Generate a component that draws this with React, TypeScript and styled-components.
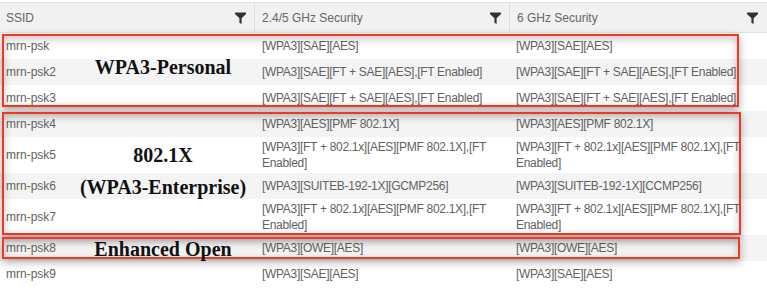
import styled, { createGlobalStyle } from 'styled-components';

const GlobalStyle = createGlobalStyle`
  html, body {
    margin: 0;
    padding: 0;
    background: #ffffff;
  }
  body {
    font-family: 'Liberation Sans', Arial, sans-serif;
  }
`;

type Row = { ssid: string; band: string; six: string };

const rows: Row[] = [
  { ssid: 'mrn-psk', band: '[WPA3][SAE][AES]', six: '[WPA3][SAE][AES]' },
  {
    ssid: 'mrn-psk2',
    band: '[WPA3][SAE][FT + SAE][AES],[FT Enabled]',
    six: '[WPA3][SAE][FT + SAE][AES],[FT Enabled]',
  },
  {
    ssid: 'mrn-psk3',
    band: '[WPA3][SAE][FT + SAE][AES],[FT Enabled]',
    six: '[WPA3][SAE][FT + SAE][AES],[FT Enabled]',
  },
  { ssid: 'mrn-psk4', band: '[WPA3][AES][PMF 802.1X]', six: '[WPA3][AES][PMF 802.1X]' },
  {
    ssid: 'mrn-psk5',
    band: '[WPA3][FT + 802.1x][AES][PMF 802.1X],[FT Enabled]',
    six: '[WPA3][FT + 802.1x][AES][PMF 802.1X],[FT Enabled]',
  },
  {
    ssid: 'mrn-psk6',
    band: '[WPA3][SUITEB-192-1X][GCMP256]',
    six: '[WPA3][SUITEB-192-1X][CCMP256]',
  },
  {
    ssid: 'mrn-psk7',
    band: '[WPA3][FT + 802.1x][AES][PMF 802.1X],[FT Enabled]',
    six: '[WPA3][FT + 802.1x][AES][PMF 802.1X],[FT Enabled]',
  },
  { ssid: 'mrn-psk8', band: '[WPA3][OWE][AES]', six: '[WPA3][OWE][AES]' },
  { ssid: 'mrn-psk9', band: '[WPA3][SAE][AES]', six: '[WPA3][SAE][AES]' },
];

// annotation boxes drawn over the table
const callouts = [
  { top: 34, height: 73, width: 737, lift: 7, lines: ['WPA3-Personal'] },
  { top: 112, height: 123, width: 739, lift: 5, lines: ['802.1X', '(WPA3-Enterprise)'] },
  { top: 237, height: 22, width: 738, lift: -2, lines: ['Enhanced Open'] },
];

const Page = styled.div`
  position: relative;
  width: 767px;
  height: 288px;
  overflow: hidden;
  color: #555;
  font-size: 12px;
`;

const Columns = `
  display: grid;
  grid-template-columns: 255px 255px 257px;
`;

const HeaderRow = styled.div`
  ${Columns};
  height: 31px;
  margin-top: 2px;
  background: #f1f1f1;
  border-top: 1px solid #e6e6e6;
  border-bottom: 1px solid #e2e2e2;
  box-sizing: border-box;
`;

const HeaderCell = styled.div`
  display: flex;
  align-items: center;
  justify-content: space-between;
  padding: 1px 8px 0 6px;
  color: #666;
  font-size: 12px;
  border-right: 1px solid #dddddd;

  &:last-child {
    border-right: none;
    padding-left: 6px;
    padding-right: 9px;
  }
  & + & {
    padding-left: 7px;
  }
`;

const DataRow = styled.div<{ $striped: boolean }>`
  ${Columns};
  min-height: 26px;
  background: ${({ $striped }) => ($striped ? '#f4f4f4' : '#ffffff')};

  &:first-of-type {
    min-height: 25px;
  }
`;

const Cell = styled.div`
  display: flex;
  align-items: center;
  padding: 2px 9px 2px 7px;
  line-height: 16px;
  color: #626262;
  letter-spacing: -0.3px;

  &:first-child {
    padding-left: 6px;
    letter-spacing: 0;
  }
  &:last-child {
    padding-left: 6px;
    padding-right: 12px;
  }
`;

const Callout = styled.div<{ $top: number; $height: number; $width: number }>`
  position: absolute;
  left: 2px;
  top: ${({ $top }) => $top}px;
  width: ${({ $width }) => $width}px;
  height: ${({ $height }) => $height}px;
  box-sizing: border-box;
  border: 2px solid #ee3a22;
  box-shadow: 0 3px 8px rgba(0, 0, 0, 0.34), inset 0 3px 8px rgba(0, 0, 0, 0.22);
  display: flex;
`;

const LabelArea = styled.div<{ $lift: number }>`
  width: 318px;
  display: flex;
  flex-direction: column;
  align-items: center;
  justify-content: center;
  padding-bottom: ${({ $lift }) => Math.max($lift, 0)}px;
  padding-top: ${({ $lift }) => Math.max(-$lift, 0)}px;
  box-sizing: border-box;
`;

const Label = styled.div`
  font-family: 'Liberation Serif', 'Times New Roman', serif;
  font-weight: bold;
  font-size: 20px;
  line-height: 32px;
  color: #111;
  white-space: nowrap;
`;

function FilterIcon() {
  return (
    <svg width="11" height="12" viewBox="0 0 11 12" aria-hidden>
      <path d="M0 0.5h11v1.6L6.6 6.2V12L4.4 10.8V6.2L0 2.1z" fill="#333" />
    </svg>
  );
}

export default function App() {
  return (
    <Page>
      <GlobalStyle />
      <HeaderRow>
        {['SSID', '2.4/5 GHz Security', '6 GHz Security'].map((h) => (
          <HeaderCell key={h}>
            <span>{h}</span>
            <FilterIcon />
          </HeaderCell>
        ))}
      </HeaderRow>
      {rows.map((r, i) => (
        <DataRow key={r.ssid} $striped={i % 2 === 1}>
          <Cell>{r.ssid}</Cell>
          <Cell>{r.band}</Cell>
          <Cell>{r.six}</Cell>
        </DataRow>
      ))}
      {callouts.map((c) => (
        <Callout key={c.top} $top={c.top} $height={c.height} $width={c.width}>
          <LabelArea $lift={c.lift}>
            {c.lines.map((l) => (
              <Label key={l}>{l}</Label>
            ))}
          </LabelArea>
        </Callout>
      ))}
    </Page>
  );
}
